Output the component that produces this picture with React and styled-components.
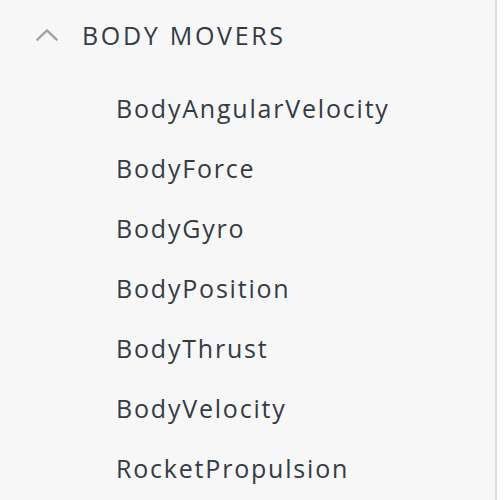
import React from "react";
import styled, { createGlobalStyle } from "styled-components";

const GlobalStyle = createGlobalStyle`
  html, body {
    margin: 0;
    padding: 0;
    background: #ffffff;
  }
  body {
    font-family: "Open Sans", "Liberation Sans", sans-serif;
  }
`;

const items = [
  "BodyAngularVelocity",
  "BodyForce",
  "BodyGyro",
  "BodyPosition",
  "BodyThrust",
  "BodyVelocity",
  "RocketPropulsion",
];

const App = () => {
  return (
    <>
      <GlobalStyle />
      <Sidebar>
        <Section>
          <Header>
            <Chevron viewBox="0 0 22 12" aria-hidden="true">
              <path d="M1.5 10.5 L11 1.5 L20.5 10.5" />
            </Chevron>
            <Title>BODY MOVERS</Title>
          </Header>
          <List>
            {items.map((name) => (
              <Item key={name}>{name}</Item>
            ))}
          </List>
        </Section>
      </Sidebar>
    </>
  );
};

export default App;

const Sidebar = styled.div`
  width: 495px;
  height: 500px;
  background: #f7f7f7;
  border-right: 2px solid #dcdcdc;
  overflow: hidden;
`;

const Section = styled.section`
  padding-top: 15px;
`;

const Header = styled.div`
  display: flex;
  align-items: center;
  height: 40px;
  padding-left: 36px;
`;

const Chevron = styled.svg`
  width: 22px;
  height: 12px;
  margin-right: 24px;
  margin-bottom: 1px;
  fill: none;
  stroke: #9aa4ab;
  stroke-width: 2.4;
  stroke-linecap: square;
`;

const Title = styled.span`
  font-size: 25px;
  line-height: 40px;
  color: #343b45;
  letter-spacing: 2.7px;
`;

const List = styled.ul`
  list-style: none;
  margin: 0;
  padding: 23px 0 0 116px;
`;

const Item = styled.li`
  height: 60px;
  line-height: 60px;
  font-size: 25px;
  color: #343b45;
  letter-spacing: 1.8px;
`;
